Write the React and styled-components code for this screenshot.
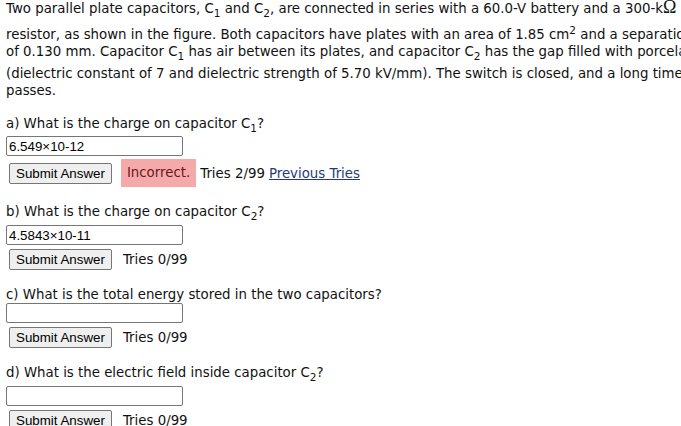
import React from 'react'
import styled, { createGlobalStyle } from 'styled-components'

const GlobalStyle = createGlobalStyle`
  html, body {
    margin: 0;
    padding: 0;
    background: #ffffff;
    overflow: hidden;
  }
`

const Page = styled.div`
  padding: 0 0 0 6px;
  font-family: "DejaVu Sans", Verdana, sans-serif;
  font-size: 13.33px;
  color: #111;
  width: 900px;
`

const Problem = styled.p`
  margin: 0;
  line-height: 17px;
  white-space: nowrap;
`

const Sub = styled.sub`
  font-size: 10.5px;
`

const Sup = styled.sup`
  font-size: 10.5px;
`

const Omega = styled.span`
  font-family: "Liberation Serif", "Times New Roman", serif;
  font-size: 18px;
  line-height: 0;
`

const Part = styled.div`
  display: flex;
  flex-direction: column;
  align-items: flex-start;
  margin-top: ${p => p.$first ? '16px' : '16px'};
`

const Question = styled.div`
  line-height: 17px;
  margin-bottom: 0;
`

const AnswerInput = styled.input`
  box-sizing: border-box;
  width: 177px;
  height: 20px;
  margin: 0;
  padding: 1px 2px;
  border: 1px solid #767676;
  border-radius: 2px;
  font-family: "Liberation Sans", Arial, sans-serif;
  font-size: 13.33px;
  color: #000;
  background: #fff;
`

const Row = styled.div`
  display: flex;
  align-items: center;
  margin-top: ${p => p.$tight ? '3px' : '4px'};
`

const SubmitButton = styled.button`
  box-sizing: border-box;
  height: 21px;
  margin: 0 0 0 3px;
  padding: 1px 6px;
  border: 1px solid #767676;
  border-radius: 2px;
  background: #efefef;
  font-family: "Liberation Sans", Arial, sans-serif;
  font-size: 13.33px;
  color: #000;
`

const Status = styled.span`
  margin-left: 9px;
  padding: 0 6px;
  height: 28px;
  line-height: 28px;
  background: #f5aaaa;
  color: #6e1420;
`

const Tries = styled.span`
  margin-left: ${p => p.$afterStatus ? '4px' : '11px'};
  line-height: 17px;
`

const PrevLink = styled.a`
  margin-left: 4px;
  color: #1f3a7a;
  text-decoration: underline;
  cursor: pointer;
`

const parts = [
  { q: <>a) What is the charge on capacitor C<Sub>1</Sub>?</>, value: '6.549×10-12', status: 'Incorrect.', tries: '2/99' },
  { q: <>b) What is the charge on capacitor C<Sub>2</Sub>?</>, value: '4.5843×10-11', tries: '0/99' },
  { q: <>c) What is the total energy stored in the two capacitors?</>, value: '', tries: '0/99' },
  { q: <>d) What is the electric field inside capacitor C<Sub>2</Sub>?</>, value: '', tries: '0/99' },
]

export default function App() {
  return (
    <Page>
      <GlobalStyle />
      <Problem>
        Two parallel plate capacitors, C<Sub>1</Sub> and C<Sub>2</Sub>, are connected in series with a 60.0-V battery and a 300-k<Omega>Ω</Omega><br />
        resistor, as shown in the figure. Both capacitors have plates with an area of 1.85 cm<Sup>2</Sup> and a separation<br />
        of 0.130 mm. Capacitor C<Sub>1</Sub> has air between its plates, and capacitor C<Sub>2</Sub> has the gap filled with porcelain<br />
        (dielectric constant of 7 and dielectric strength of 5.70 kV/mm). The switch is closed, and a long time<br />
        passes.
      </Problem>
      {parts.map((p, i) => (
        <Part key={i} $first={i === 0}>
          <Question>{p.q}</Question>
          <AnswerInput type="text" defaultValue={p.value} />
          <Row $tight={!!p.status}>
            <SubmitButton>Submit Answer</SubmitButton>
            {p.status && <Status>{p.status}</Status>}
            <Tries $afterStatus={!!p.status}>Tries {p.tries}</Tries>
            {p.status && <PrevLink>Previous Tries</PrevLink>}
          </Row>
        </Part>
      ))}
    </Page>
  )
}
